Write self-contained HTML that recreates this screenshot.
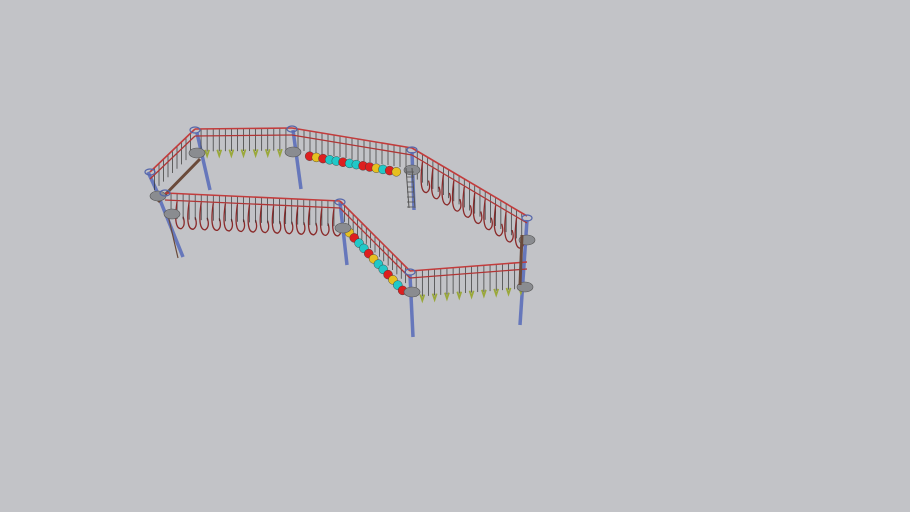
<!DOCTYPE html><html><head><style>html,body{margin:0;padding:0;background:#c2c3c7;width:910px;height:512px;overflow:hidden}</style></head><body>
<svg id="s" width="910" height="512" xmlns="http://www.w3.org/2000/svg"></svg>
<script>
const s=document.getElementById('s');
function el(t,a){const e=document.createElementNS('http://www.w3.org/2000/svg',t);for(const k in a)e.setAttribute(k,a[k]);s.appendChild(e);return e;}
function ln(x1,y1,x2,y2,c,w){el('line',{x1,y1,x2,y2,stroke:c,'stroke-width':w});}
[[197,133,210,190],[293,130,301,189],[412,152,414,210],[340,202,347,265],[410,275,413,337],[527,220,520,325],[160,200,183,257],[148,172,160,198]].forEach(p=>ln(p[0],p[1],p[2],p[3],'#6677bb',3.5));
ln(168,215,178,258,'#6a4a3a',1.2);
const segs=[
 [[150,172],[195,129],'b',30],
 [[195,129],[292,128],'y',30],
 [[292,128],[412,148],'c',28],
 [[412,148],[527,216],'r',38],
 [[165,193],[340,201],'r',34],
 [[340,201],[410,271],'c',22],
 [[410,271],[527,262],'y',35]];
segs.forEach(([a,b,type,len])=>{
 const dx=b[0]-a[0],dy=b[1]-a[1],L=Math.hypot(dx,dy),n=Math.floor(L/6);
 for(let i=1;i<n;i++){const t=i/n,x=a[0]+dx*t,y=a[1]+dy*t;
  ln(x,y,x,y+len*0.75,'#333',0.7);
  if(type=='r'&&i%2==0){el('path',{d:`M${x} ${y+8} q-4 ${len*0.8} 4 ${len*0.8} q5 -3 2 -12`,stroke:'#8a2a2a','stroke-width':1.3,fill:'none'});}
  if(type=='y'&&i%2==0)el('path',{d:`M${x-2} ${y+len*0.7} l2 6 l2 -6`,stroke:'#9aa83a','stroke-width':1.8,fill:'none'});
 }
 ln(a[0],a[1],b[0],b[1],'#c23c3c',1.6);
 ln(a[0],a[1]+7,b[0],b[1]+7,'#b03535',1.3);
 if(type=='b')ln(a[0]+8,a[1]+30,b[0]+5,b[1]+30,'#6a4a3a',3);
});
const cols=['#dd2020','#e6c020','#dd2020','#22c8c8','#22c8c8','#dd2020','#22c8c8','#22c8c8','#dd2020','#dd2020','#e6c020','#22c8c8','#dd2020','#e6c020'];
for(let i=0;i<14;i++){const t=(i+1)/15,x=303+t*100,y=155+t*18;el('ellipse',{cx:x,cy:y,rx:4.5,ry:4.5,fill:cols[i],stroke:'#333','stroke-width':0.4});}
const c2=['#e6c020','#dd2020','#22c8c8','#22c8c8','#dd2020','#e6c020','#22c8c8','#22c8c8','#dd2020','#e6c020','#22c8c8','#dd2020'];
for(let i=0;i<12;i++){const t=(i+0.5)/12,x=347+t*58,y=230+t*63;el('ellipse',{cx:x,cy:y,rx:4.5,ry:4.5,fill:c2[i],stroke:'#333','stroke-width':0.4});}
[[197,153],[293,152],[412,170],[343,228],[412,292],[525,287],[158,196],[172,214],[527,240]].forEach(p=>el('ellipse',{cx:p[0],cy:p[1],rx:8,ry:5,fill:'#8a8c90',stroke:'#555','stroke-width':0.6}));
[[195,130],[292,129],[412,150],[150,172],[527,218],[410,272],[340,202],[165,193]].forEach(p=>el('ellipse',{cx:p[0],cy:p[1],rx:5,ry:3,fill:'none',stroke:'#5566aa','stroke-width':1.2}));
ln(406,168,409,208,'#555',1);ln(412,168,415,208,'#555',1);
for(let y=172;y<208;y+=5)ln(407,y,414,y,'#555',0.8);
ln(522,235,520,285,'#6a4a3a',3);
</script>
</body></html>
